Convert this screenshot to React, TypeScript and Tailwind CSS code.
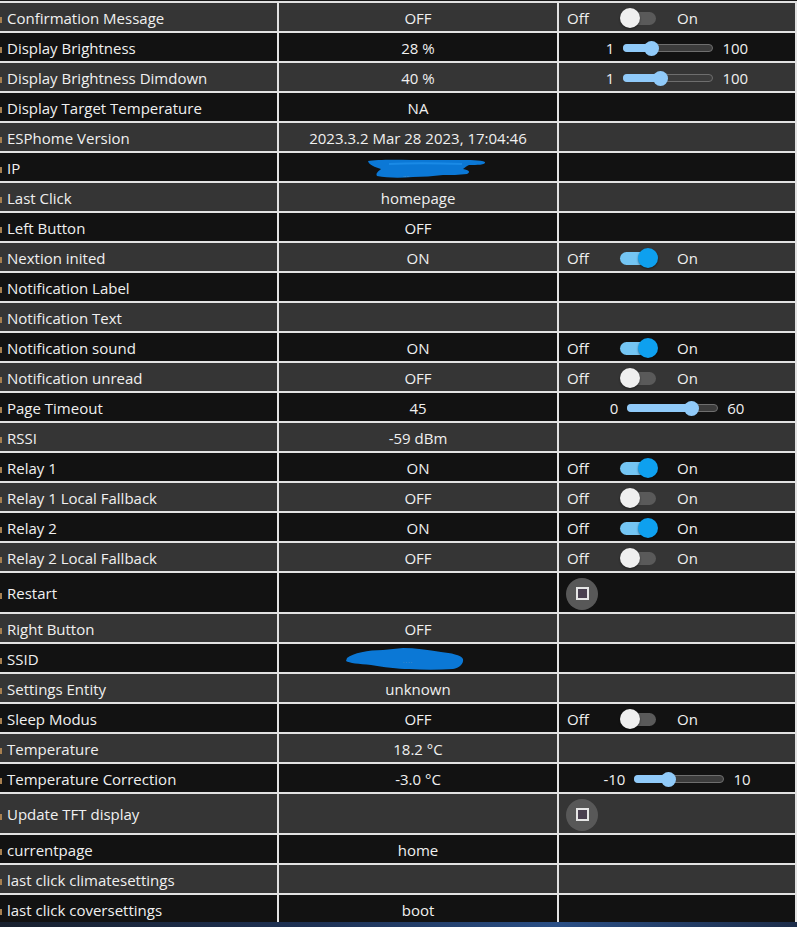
import React from "react";

type Ctrl =
  | { k: "none" }
  | { k: "switch"; on: boolean }
  | { k: "slider"; min: number; max: number; val: number; w: number }
  | { k: "button" };

type Row = { name: string; state?: string; ctrl: Ctrl; tall?: boolean; blob?: "ip" | "ssid" };

const rows: Row[] = [
  { name: "Confirmation Message", state: "OFF", ctrl: { k: "switch", on: false } },
  { name: "Display Brightness", state: "28 %", ctrl: { k: "slider", min: 1, max: 100, val: 28, w: 90 } },
  { name: "Display Brightness Dimdown", state: "40 %", ctrl: { k: "slider", min: 1, max: 100, val: 40, w: 90 } },
  { name: "Display Target Temperature", state: "NA", ctrl: { k: "none" } },
  { name: "ESPhome Version", state: "2023.3.2 Mar 28 2023, 17:04:46", ctrl: { k: "none" } },
  { name: "IP", ctrl: { k: "none" }, blob: "ip" },
  { name: "Last Click", state: "homepage", ctrl: { k: "none" } },
  { name: "Left Button", state: "OFF", ctrl: { k: "none" } },
  { name: "Nextion inited", state: "ON", ctrl: { k: "switch", on: true } },
  { name: "Notification Label", ctrl: { k: "none" } },
  { name: "Notification Text", ctrl: { k: "none" } },
  { name: "Notification sound", state: "ON", ctrl: { k: "switch", on: true } },
  { name: "Notification unread", state: "OFF", ctrl: { k: "switch", on: false } },
  { name: "Page Timeout", state: "45", ctrl: { k: "slider", min: 0, max: 60, val: 45, w: 91 } },
  { name: "RSSI", state: "-59 dBm", ctrl: { k: "none" } },
  { name: "Relay 1", state: "ON", ctrl: { k: "switch", on: true } },
  { name: "Relay 1 Local Fallback", state: "OFF", ctrl: { k: "switch", on: false } },
  { name: "Relay 2", state: "ON", ctrl: { k: "switch", on: true } },
  { name: "Relay 2 Local Fallback", state: "OFF", ctrl: { k: "switch", on: false } },
  { name: "Restart", ctrl: { k: "button" }, tall: true },
  { name: "Right Button", state: "OFF", ctrl: { k: "none" } },
  { name: "SSID", ctrl: { k: "none" }, blob: "ssid" },
  { name: "Settings Entity", state: "unknown", ctrl: { k: "none" } },
  { name: "Sleep Modus", state: "OFF", ctrl: { k: "switch", on: false } },
  { name: "Temperature", state: "18.2 °C", ctrl: { k: "none" } },
  { name: "Temperature Correction", state: "-3.0 °C", ctrl: { k: "slider", min: -10, max: 10, val: -3, w: 90 } },
  { name: "Update TFT display", ctrl: { k: "button" }, tall: true },
  { name: "currentpage", state: "home", ctrl: { k: "none" } },
  { name: "last click climatesettings", ctrl: { k: "none" } },
  { name: "last click coversettings", state: "boot", ctrl: { k: "none" } },
];

function Switch({ on }: { on: boolean }) {
  return (
    <div className="relative w-[38px] h-[20px] flex items-center">
      <div className={`w-[36px] h-[13px] rounded-full ${on ? "bg-[#74c5f3]" : "bg-[#5a5a5a]"}`} />
      <div
        className={`absolute top-0 w-[20px] h-[20px] rounded-full shadow-[0_1px_2px_rgba(0,0,0,0.5)] ${
          on ? "left-[18px] bg-[#0ea0ef]" : "left-0 bg-[#efefef]"
        }`}
      />
    </div>
  );
}

function Slider({ min, max, val, w }: { min: number; max: number; val: number; w: number }) {
  const frac = (val - min) / (max - min);
  const thumb = 15;
  const center = thumb / 2 + frac * (w - thumb);
  return (
    <div className="relative h-[16px] flex items-center" style={{ width: w }}>
      <div className="w-full h-[8px] rounded-full bg-[#3c3c3c] border border-[#6e6e6e]" />
      <div className="absolute left-0 h-[8px] rounded-full bg-[#90caf9]" style={{ width: center }} />
      <div
        className="absolute top-[0.5px] w-[15px] h-[15px] rounded-full bg-[#90caf9]"
        style={{ left: center - thumb / 2 }}
      />
    </div>
  );
}

function Blob({ kind }: { kind: "ip" | "ssid" }) {
  if (kind === "ip") {
    return (
      <svg width="120" height="20" viewBox="0 0 120 20" className="ml-[17px] mt-[2px]">
        <path
          d="M1 2 C10 0 40 1 60 1 L92 1 C102 1 114 1 118 3 C119 6 110 6 102 6 C99 7 98 9 96 10 C102 11 104 13 100 15 C92 16 84 16 76 16 C66 17 56 18 46 18 C34 19 20 19 10 17 C8 14 12 12 14 10 C8 8 2 6 1 2 Z"
          fill="#0b78d6"
        />
        <path d="M22 5 C40 4 70 4 95 5" stroke="#1a8ae6" strokeWidth="2" fill="none" />
        <text x="36" y="19" fill="#9ab" fontSize="6">····</text>
      </svg>
    );
  }
  return (
    <svg width="122" height="26" viewBox="0 0 122 26" className="mr-[28px]">
      <path
        d="M4 12 C10 7 25 4 40 4 L60 2 C72 2 85 4 98 6 C108 7 118 9 120 13 C121 18 116 22 110 23 C95 24 80 24 66 23 C55 23 40 21 28 19 C16 18 6 17 3 15 Z"
        fill="#0b78d6"
      />
      <text x="60" y="18" fill="#9ab" fontSize="5">· · · ·</text>
    </svg>
  );
}

export default function App() {
  return (
    <div
      className="w-[797px] h-[927px] overflow-hidden bg-[#1a1a1a] text-[#f0f0f0] text-[15px] flex flex-col"
      style={{ fontFamily: '"Open Sans", "Noto Sans", sans-serif' }}
    >
      <div className="h-[922px] overflow-hidden pt-[1px]">
        {rows.map((r, i) => {
          const bg = i % 2 === 0 ? "bg-[#353535]" : "bg-[#121212]";
          return (
            <div
              key={r.name}
              className={`flex ${bg} border-t-2 border-[#e2e2e2] ${r.tall ? "h-[41px]" : "h-[30px]"}`}
            >
              <div className="w-[279px] pt-[2px] border-r-2 border-[#e2e2e2] flex items-center">
                <span className="w-[2px] h-[6px] mt-[4px] bg-[#a88050] mr-[5px]" />
                <span className="whitespace-nowrap">{r.name}</span>
              </div>
              <div className="w-[280px] pt-[2px] border-r-2 border-[#e2e2e2] flex items-center justify-center">
                {r.state && <span className="whitespace-nowrap">{r.state}</span>}
                {r.blob && <Blob kind={r.blob} />}
              </div>
              <div className="w-[238px] pt-[2px] border-r-2 border-[#e2e2e2] flex items-center">
                {r.ctrl.k === "switch" && (
                  <div className="flex items-center pl-[8px]">
                    <span className="w-[53px]">Off</span>
                    <Switch on={r.ctrl.on} />
                    <span className="ml-[19px]">On</span>
                  </div>
                )}
                {r.ctrl.k === "slider" && (
                  <div className="flex-1 flex items-center justify-center gap-[9px]">
                    <span>{r.ctrl.min}</span>
                    <Slider min={r.ctrl.min} max={r.ctrl.max} val={r.ctrl.val} w={r.ctrl.w} />
                    <span>{r.ctrl.max}</span>
                  </div>
                )}
                {r.ctrl.k === "button" && (
                  <div className="ml-[7px] w-[32px] h-[32px] rounded-full bg-[#585858] flex items-center justify-center">
                    <div className="w-[13px] h-[13px] border-2 border-[#e6e6e6] bg-[#4a4050]" />
                  </div>
                )}
              </div>
            </div>
          );
        })}
      </div>
      <div className="h-[5px] bg-[linear-gradient(90deg,#18202e_0%,#1e3256_40%,#2a4f86_70%,#1d2d4a_100%)]" />
    </div>
  );
}
